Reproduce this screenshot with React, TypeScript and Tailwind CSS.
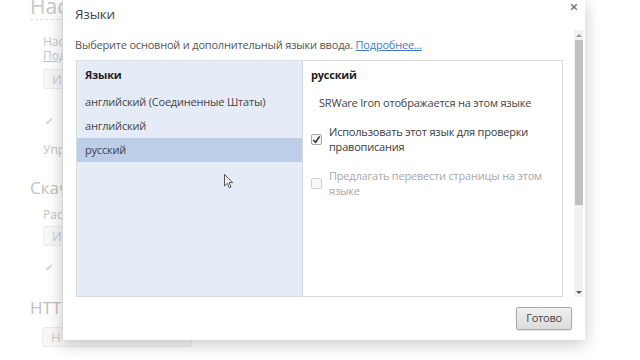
import React from 'react';

const languages = ['английский (Соединенные Штаты)', 'английский', 'русский'];

const FadedButton: React.FC<{ label: string; width: string }> = ({ label, width }) => (
    <div className={`h-[20px] ${width} border border-[#ececec] bg-[#f8f8f8] rounded-[2px] pl-[8px] text-[13px] leading-[18px] text-[#cfcfcf]`}>
        <div className="w-[10px] overflow-hidden whitespace-nowrap">{label}</div>
    </div>
);

const FadedCheck: React.FC = () => (
    <div className="w-[12px] h-[12px] flex items-center justify-center text-[10px] text-[#d0d0d0]">✔</div>
);

const App: React.FC = () => {
    const selected = 'русский';

    return (
        <div className="relative w-[640px] h-[360px] overflow-hidden bg-white" style={{ fontFamily: '"Open Sans", "Noto Sans", sans-serif' }}>

            {/* --- Страница настроек (фон, виден только край слева) --- */}
            <div className="pl-[30px] text-[#c6c6c6]">
                <div className="w-[32px] overflow-hidden whitespace-nowrap text-[21px] leading-[26px] -mt-[7px] text-[#c8c8c8]">Настройки</div>
                <div className="w-[120px] border-b border-dashed border-[#dedede]"></div>
                <div className="pl-[13px] pt-[15px] text-[12px]">
                    <div className="w-[19px] overflow-hidden whitespace-nowrap leading-[14px]">Настройки</div>
                    <div className="w-[19px] overflow-hidden whitespace-nowrap leading-[14px] underline text-[#b9c6d9]">Подробнее</div>
                    <div className="mt-[6px]"><FadedButton label="Изменить" width="w-[140px]" /></div>
                    <div className="mt-[20px] flex gap-[7px]">
                        <div className="pt-[6px]"><FadedCheck /></div>
                        <div className="leading-[15px]">П<br />г</div>
                    </div>
                    <div className="w-[19px] overflow-hidden whitespace-nowrap mt-[4px] leading-[14px]">Управление</div>
                </div>
                <div className="w-[32px] overflow-hidden whitespace-nowrap text-[17px] leading-[22px] mt-[20px] text-[#c2c2c2]">Скачанные файлы</div>
                <div className="pl-[13px] pt-[9px] text-[12px]">
                    <div className="w-[19px] overflow-hidden whitespace-nowrap leading-[14px]">Расположение</div>
                    <div className="mt-[4px]"><FadedButton label="Изменить" width="w-[140px]" /></div>
                    <div className="mt-[15px] flex gap-[7px]">
                        <FadedCheck />
                        <div className="leading-[14px]">З</div>
                    </div>
                </div>
                <div className="w-[32px] overflow-hidden whitespace-nowrap text-[17px] leading-[22px] mt-[22px] text-[#c2c2c2]">HTTPS/SSL</div>
                <div className="pl-[12px] pt-[8px]">
                    <FadedButton label="Настроить" width="w-[150px]" />
                </div>
            </div>

            {/* --- Диалог "Языки" --- */}
            <div className="absolute left-[62px] top-0 w-[523px] h-[340px] bg-white border-l border-[#d6d6d6] shadow-[0_4px_16px_rgba(0,0,0,0.22)] text-[#333] tracking-[-0.2px]">
                <div className="h-[30px] pl-[12px] pt-[4px] text-[13.5px] leading-[20px] text-[#444]">Языки</div>
                <button className="absolute right-[4px] top-[0px] w-[14px] h-[14px] flex items-center justify-center">
                    <svg viewBox="0 0 10 10" className="w-[8px] h-[8px]">
                        <path d="M1.5 1.5 L8.5 8.5 M8.5 1.5 L1.5 8.5" stroke="#7a7a7a" strokeWidth="2" />
                    </svg>
                </button>

                <div className="flex h-[267px]">
                    <div className="flex-grow pl-[12px]">
                        <div className="text-[11px] leading-[16px] pt-[7px] text-[#555]">
                            Выберите основной и дополнительный языки ввода.{' '}
                            <span className="text-[#3f7cc8] underline">Подробнее...</span>
                        </div>

                        <div className="mt-[7px] ml-[1px] flex h-[237px] w-[487px] border border-[#dcdcdc] text-[11px]">
                            {/* Список языков */}
                            <div className="w-[226px] bg-[#e6ecf7] border-r border-[#d4d8de]">
                                <div className="h-[29px] pl-[8px] pt-[6px] font-bold text-[#222] leading-[16px]">Языки</div>
                                {languages.map(lang => (
                                    <div
                                        key={lang}
                                        className={`h-[24px] pl-[8px] leading-[24px] text-[#444] ${lang === selected ? 'bg-[#bccee8]' : ''}`}
                                    >
                                        {lang}
                                    </div>
                                ))}
                            </div>

                            {/* Настройки выбранного языка */}
                            <div className="flex-grow bg-white pl-[8px]">
                                <div className="pt-[6px] font-bold text-[#222] leading-[16px]">русский</div>
                                <div className="mt-[12px] pl-[8px] leading-[16px] text-[#444]">SRWare Iron отображается на этом языке</div>
                                <div className="mt-[13px] flex items-center gap-[7px]">
                                    <div className="w-[11px] h-[11px] border border-[#a8a8a8] rounded-[2px] bg-[#f4f4f4] flex items-center justify-center">
                                        <svg viewBox="0 0 10 10" className="w-[9px] h-[9px]">
                                            <path d="M1.5 5.5 L4 8 L8.5 1.5" fill="none" stroke="#333" strokeWidth="1.8" />
                                        </svg>
                                    </div>
                                    <div className="leading-[15px] text-[#3a3a3a]">Использовать этот язык для проверки<br />правописания</div>
                                </div>
                                <div className="mt-[14px] flex items-center gap-[7px]">
                                    <div className="w-[11px] h-[11px] border border-[#d2d2d2] rounded-[2px] bg-[#f7f7f7]"></div>
                                    <div className="leading-[15px] text-[#a8a8a8]">Предлагать перевести страницы на этом<br />языке</div>
                                </div>
                            </div>
                        </div>
                    </div>

                    {/* Полоса прокрутки */}
                    <div className="w-[9px] mr-[2px] bg-[#f1f1f1] flex flex-col items-center">
                        <div className="h-[10px] flex items-center justify-center">
                            <div className="w-0 h-0 border-l-[3px] border-r-[3px] border-b-[3px] border-l-transparent border-r-transparent border-b-[#999]"></div>
                        </div>
                        <div className="w-[8px] h-[165px] bg-[#c1c1c1]"></div>
                        <div className="flex-grow"></div>
                        <div className="h-[10px] flex items-center justify-center">
                            <div className="w-0 h-0 border-l-[3px] border-r-[3px] border-t-[3px] border-l-transparent border-r-transparent border-t-[#555]"></div>
                        </div>
                    </div>
                </div>

                <div className="flex justify-end pr-[13px] pt-[10px]">
                    <button className="h-[23px] px-[9px] text-[11px] text-[#444] border border-[#a9a9a9] rounded-[2px] bg-gradient-to-b from-[#f0f0f0] to-[#dcdcdc] shadow-[0_1px_1px_rgba(0,0,0,0.1)]">
                        Готово
                    </button>
                </div>
            </div>

            {/* Курсор мыши */}
            <svg className="absolute left-[224px] top-[174px]" width="10" height="15" viewBox="0 0 10 15">
                <path d="M0.5 0.5 L0.5 12 L3.3 9.3 L5.3 13.8 L7 13 L5 8.6 L8.8 8.6 Z" fill="#f5f5f5" stroke="#555" strokeWidth="1" />
            </svg>
        </div>
    );
};

export default App;
